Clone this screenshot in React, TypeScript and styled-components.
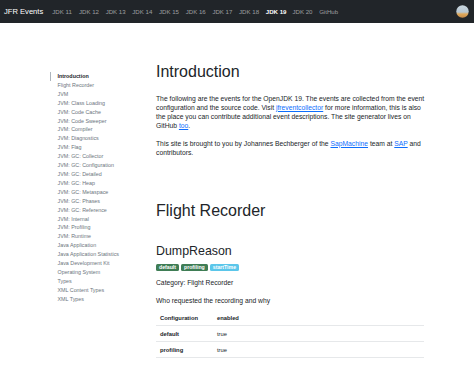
import React from "react";
import styled, { createGlobalStyle } from "styled-components";

const Global = createGlobalStyle`
  html, body { margin: 0; padding: 0; background: #fff; }
  body { font-family: "Liberation Sans", Arial, sans-serif; color: #212529; }
`;

const Nav = styled.nav`
  height: 23px;
  background: #212529;
  display: flex;
  align-items: center;
  padding: 0 5px 0 4px;
`;

const Brand = styled.span`
  color: #fff;
  font-size: 7.6px;
  margin-right: 9px;
`;

const NavLink = styled.span<{ $active?: boolean }>`
  color: ${(p) => (p.$active ? "#fff" : "rgba(255,255,255,0.55)")};
  font-weight: ${(p) => (p.$active ? "bold" : "normal")};
  font-size: 6.1px;
  width: 26.7px;
  white-space: nowrap;
`;

const Spacer = styled.div`
  flex: 1;
`;

const Layout = styled.div`
  display: flex;
  padding-left: 50px;
`;

const Side = styled.aside`
  width: 106px;
  padding-top: 49px;
  display: flex;
  flex-direction: column;
`;

const SideItem = styled.div<{ $active?: boolean }>`
  font-size: 5.35px;
  line-height: 8.92px;
  height: 8.92px;
  padding-left: 6.5px;
  color: ${(p) => (p.$active ? "#212529" : "#6c757d")};
  font-weight: ${(p) => (p.$active ? "bold" : "normal")};
  border-left: 1.5px solid ${(p) => (p.$active ? "#adb5bd" : "transparent")};
  white-space: nowrap;
`;

const Main = styled.main`
  width: 268px;
  padding-top: 39px;
`;

const H1 = styled.h1<{ $top?: number }>`
  font-size: 16px;
  font-weight: normal;
  margin: ${(p) => p.$top || 0}px 0 0;
  line-height: 20px;
`;

const Para = styled.p<{ $top: number }>`
  font-size: 6.75px;
  line-height: 9px;
  margin: ${(p) => p.$top}px 0 0;
  white-space: nowrap;
`;

const A = styled.a`
  color: #0d6efd;
  text-decoration: underline;
`;

const H2 = styled.h2`
  font-size: 12.4px;
  font-weight: normal;
  margin: 22px 0 0;
  line-height: 16px;
`;

const Badges = styled.div`
  display: flex;
  gap: 2px;
  margin-top: 4.5px;
`;

const Badge = styled.span<{ $color: string }>`
  background: ${(p) => p.$color};
  color: #fff;
  font-size: 5.2px;
  font-weight: bold;
  padding: 0 3px;
  height: 7.5px;
  line-height: 7.5px;
  border-radius: 1.5px;
`;

const Table = styled.table`
  width: 268px;
  border-collapse: collapse;
  margin-top: 5px;
  font-size: 5.8px;
`;

const Th = styled.th<{ $w?: string }>`
  text-align: left;
  font-weight: bold;
  padding: 0 4px;
  height: 15px;
  border-bottom: 1px solid #e6e8ea;
  width: ${(p) => p.$w || "auto"};
`;

const Td = styled.td<{ $bold?: boolean }>`
  padding: 0 4px;
  height: 15px;
  font-weight: ${(p) => (p.$bold ? "bold" : "normal")};
  border-bottom: 1px solid #e6e8ea;
`;

const jdks = ["JDK 11", "JDK 12", "JDK 13", "JDK 14", "JDK 15", "JDK 16", "JDK 17", "JDK 18", "JDK 19", "JDK 20", "GitHub"];

const sideItems = [
  "Introduction", "Flight Recorder", "JVM", "JVM: Class Loading", "JVM: Code Cache", "JVM: Code Sweeper",
  "JVM: Compiler", "JVM: Diagnostics", "JVM: Flag", "JVM: GC: Collector", "JVM: GC: Configuration",
  "JVM: GC: Detailed", "JVM: GC: Heap", "JVM: GC: Metaspace", "JVM: GC: Phases", "JVM: GC: Reference",
  "JVM: Internal", "JVM: Profiling", "JVM: Runtime", "Java Application", "Java Application Statistics",
  "Java Development Kit", "Operating System", "Types", "XML Content Types", "XML Types",
];

const Avatar = () => (
  <svg width="13" height="13" viewBox="0 0 13 13">
    <defs>
      <linearGradient id="av" x1="0" y1="0" x2="0" y2="1">
        <stop offset="0" stopColor="#c9d6de" />
        <stop offset="0.55" stopColor="#b7c7d2" />
        <stop offset="0.7" stopColor="#e0a95a" />
        <stop offset="1" stopColor="#c48b4a" />
      </linearGradient>
    </defs>
    <circle cx="6.5" cy="6.5" r="6.2" fill="url(#av)" />
  </svg>
);

export default function App() {
  return (
    <>
      <Global />
      <Nav>
        <Brand>JFR Events</Brand>
        {jdks.map((j) => (
          <NavLink key={j} $active={j === "JDK 19"}>{j}</NavLink>
        ))}
        <Spacer />
        <Avatar />
      </Nav>
      <Layout>
        <Side>
          {sideItems.map((s, i) => (
            <SideItem key={s} $active={i === 0}>{s}</SideItem>
          ))}
        </Side>
        <Main>
          <H1>Introduction</H1>
          <Para $top={11.5}>
            The following are the events for the OpenJDK 19. The events are collected from the event
            <br />
            configuration and the source code. Visit <A>jfreventcollector</A> for more information, this is also
            <br />
            the place you can contribute additional event descriptions. The site generator lives on
            <br />
            GitHub <A>too</A>.
          </Para>
          <Para $top={9}>
            This site is brought to you by Johannes Bechberger of the <A>SapMachine</A> team at <A>SAP</A> and
            <br />
            contributors.
          </Para>
          <H1 $top={44.5}>Flight Recorder</H1>
          <H2>DumpReason</H2>
          <Badges>
            <Badge $color="#3f7d55">default</Badge>
            <Badge $color="#3f7d55">profiling</Badge>
            <Badge $color="#5bc6ea">startTime</Badge>
          </Badges>
          <Para $top={7}>Category: Flight Recorder</Para>
          <Para $top={9}>Who requested the recording and why</Para>
          <Table>
            <thead>
              <tr>
                <Th $w="49px">Configuration</Th>
                <Th>enabled</Th>
              </tr>
            </thead>
            <tbody>
              <tr>
                <Td $bold>default</Td>
                <Td>true</Td>
              </tr>
              <tr>
                <Td $bold>profiling</Td>
                <Td>true</Td>
              </tr>
            </tbody>
          </Table>
        </Main>
      </Layout>
    </>
  );
}
